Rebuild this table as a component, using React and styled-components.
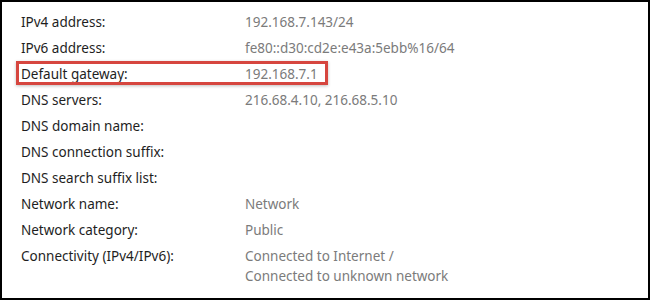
import React from "react";
import styled, { createGlobalStyle } from "styled-components";

const GlobalStyle = createGlobalStyle`
  html, body {
    margin: 0;
    padding: 0;
    background: #ffffff;
  }
`;

const rows = [
  { label: "", value: ["\u2022\u2022\u2022"] },
  { label: "IPv4 address:", value: ["192.168.7.143/24"] },
  { label: "IPv6 address:", value: ["fe80::d30:cd2e:e43a:5ebb%16/64"] },
  { label: "Default gateway:", value: ["192.168.7.1"], marked: true },
  { label: "DNS servers:", value: ["216.68.4.10, 216.68.5.10"] },
  { label: "DNS domain name:", value: [] },
  { label: "DNS connection suffix:", value: [] },
  { label: "DNS search suffix list:", value: [] },
  { label: "Network name:", value: ["Network"] },
  { label: "Network category:", value: ["Public"] },
  {
    label: "Connectivity (IPv4/IPv6):",
    value: ["Connected to Internet /", "Connected to unknown network"],
  },
];

export default function App() {
  return (
    <React.Fragment>
      <GlobalStyle />
      <Frame>
        <PropertyList>
          {rows.map((row, i) => (
            <Row key={i} $marked={row.marked}>
              <Label>{row.label}</Label>
              <Value>
                {row.value.map((line) => (
                  <div key={line}>{line}</div>
                ))}
              </Value>
            </Row>
          ))}
        </PropertyList>
      </Frame>
    </React.Fragment>
  );
}

const Frame = styled.div`
  box-sizing: border-box;
  width: 650px;
  height: 300px;
  border: 2px solid #000;
  background: #fff;
  overflow: hidden;
  font-family: "Noto Sans", "Open Sans", sans-serif;
  font-size: 13.5px;
`;

const PropertyList = styled.div`
  display: flex;
  flex-direction: column;
  gap: 6px;
  padding: 0 0 0 19px;
  margin-top: -16px;
`;

const Row = styled.div`
  position: relative;
  display: grid;
  grid-template-columns: 224px 1fr;
  line-height: 20px;
  min-height: 20px;

  &::after {
    content: "";
    display: ${(p) => (p.$marked ? "block" : "none")};
    position: absolute;
    left: -5px;
    top: -3px;
    width: 312px;
    height: 24px;
    box-sizing: border-box;
    border: 3px solid #d6463f;
    box-shadow: 0 1px 3px rgba(0, 0, 0, 0.25);
  }
`;

const Label = styled.div`
  color: #1e1e1e;
  white-space: nowrap;
`;

const Value = styled.div`
  color: #7b7b7b;
  white-space: nowrap;
`;
